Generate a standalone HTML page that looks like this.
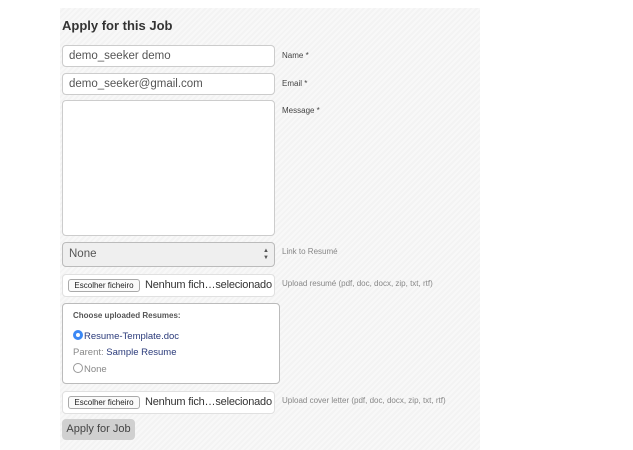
<!DOCTYPE html>
<html><head><style>
body{margin:0;width:633px;height:450px;background:#fff;font-family:"Liberation Sans",Arial,sans-serif;position:relative;overflow:hidden}
.panel{position:absolute;left:60px;top:8px;width:420px;height:442px;background:repeating-linear-gradient(135deg,#f8f8f8 0 2px,#f3f3f3 2px 4px)}
.a{position:absolute}
h3{position:absolute;left:62px;top:18px;margin:0;font-size:13px;font-weight:bold;color:#333}
.in{position:absolute;left:62px;width:213px;background:#fff;border:1px solid #ccc;border-radius:4px;box-sizing:border-box;font-size:11.5px;color:#555;padding-left:6px;white-space:nowrap;overflow:hidden}
.lbl{position:absolute;left:282px;font-size:8px;color:#888;white-space:nowrap}
.lb{color:#444}
.f{position:absolute;top:4px;left:5px;height:13px;width:72px;box-sizing:border-box;border:1px solid #aaa;border-radius:3px;background:#fafafa;font-size:8px;color:#222;line-height:11px;text-align:center}
.ft{position:absolute;left:82px;top:3px;font-size:11px;line-height:15px;color:#333;letter-spacing:-0.2px}
</style></head><body>
<div class="panel"></div>
<h3>Apply for this Job</h3>
<div class="in" style="top:45px;height:22px;line-height:20px">demo_seeker demo</div>
<div class="lbl lb" style="top:51px">Name *</div>
<div class="in" style="top:73px;height:22px;line-height:20px">demo_seeker@gmail.com</div>
<div class="lbl lb" style="top:79px">Email *</div>
<div class="in" style="top:100px;height:136px"></div>
<div class="lbl lb" style="top:106px">Message *</div>
<div class="in" style="top:242px;height:25px;line-height:23px;background:#efefef;border-color:#bbb">None<span style="position:absolute;right:5px;top:0;font-size:6px;line-height:7px;padding-top:5px;color:#555">▲<br>▼</span></div>
<div class="lbl" style="top:247px">Link to Resumé</div>
<div class="in" style="top:274px;height:23px;border-color:#e0e0e0"><span class="f">Escolher ficheiro</span><span class="ft">Nenhum fich…selecionado</span></div>
<div class="lbl" style="top:279px">Upload resumé (pdf, doc, docx, zip, txt, rtf)</div>
<div class="in" style="top:303px;height:81px;left:62px;width:218px;padding-left:10px;border-color:#bbb">
<div style="position:absolute;top:7px;font-size:8px;font-weight:bold;color:#555">Choose uploaded Resumes:</div>
<div style="position:absolute;top:26px;font-size:9.5px;color:#2a3a7a"><span style="display:inline-block;width:4px;height:4px;border-radius:50%;border:3px solid #3b88f5;background:#fff;vertical-align:-1px;margin-right:1px"></span>Resume-Template.doc</div>
<div style="position:absolute;top:43px;font-size:9.5px;color:#888">Parent: <span style="color:#2a3a7a">Sample Resume</span></div>
<div style="position:absolute;top:59px;font-size:9.5px;color:#888"><span style="display:inline-block;width:8px;height:8px;border-radius:50%;border:1px solid #999;vertical-align:-1px;margin-right:1px"></span>None</div>
</div>
<div class="in" style="top:391px;height:23px;border-color:#e0e0e0"><span class="f">Escolher ficheiro</span><span class="ft">Nenhum fich…selecionado</span></div>
<div class="lbl" style="top:396px">Upload cover letter (pdf, doc, docx, zip, txt, rtf)</div>
<div class="a" style="left:62px;top:419px;width:73px;height:21px;background:#d0d0d0;border-radius:4px;font-size:11px;color:#444;line-height:21px;text-align:center">Apply for Job</div>
</body></html>
